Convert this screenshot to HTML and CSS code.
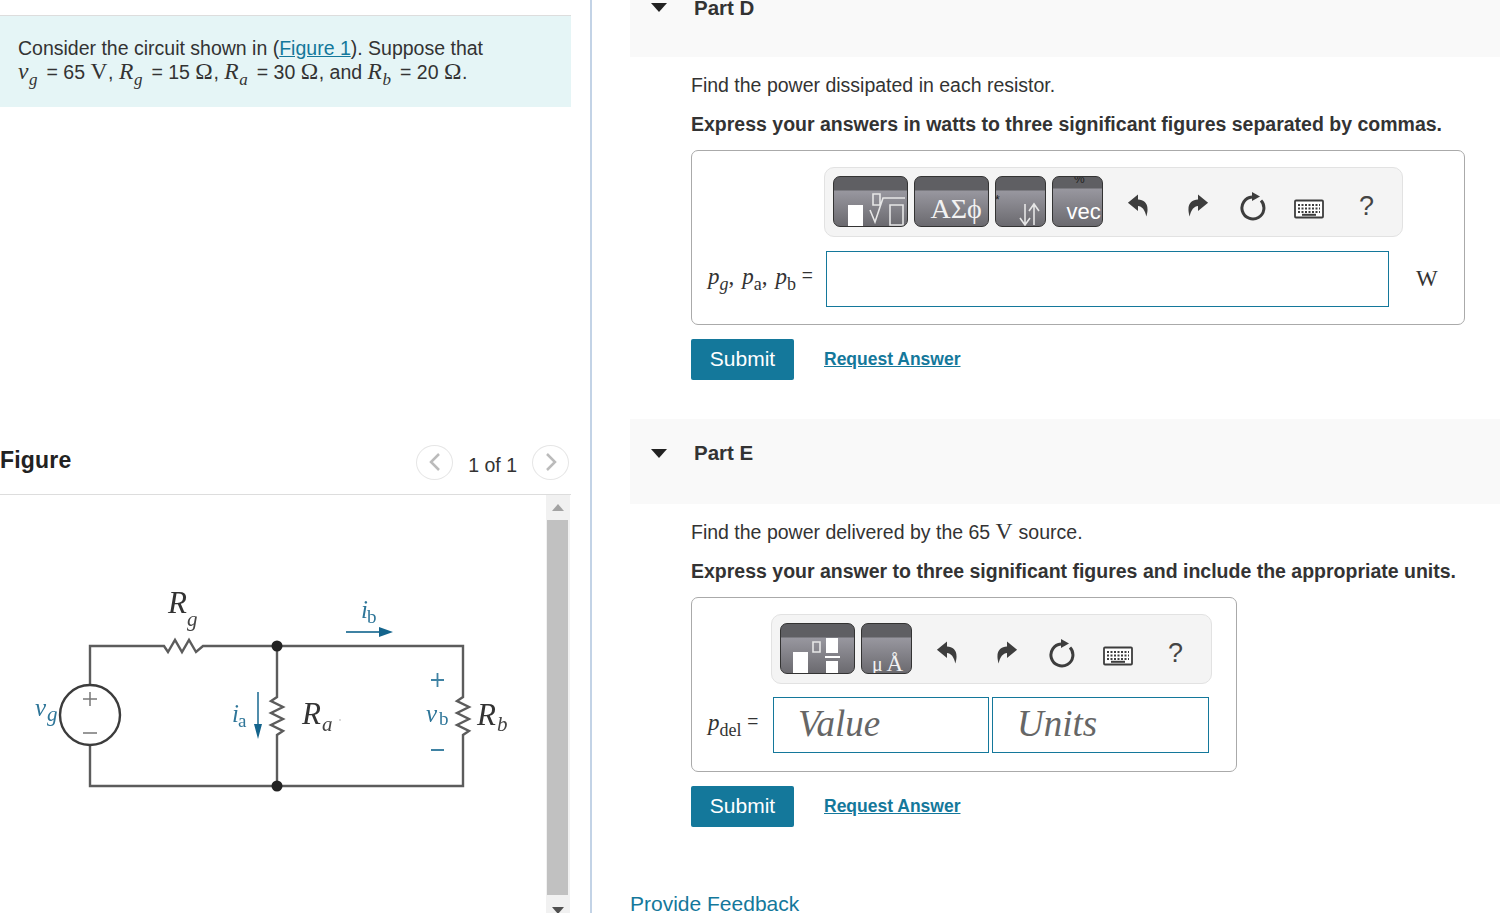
FILE: index.html
```html
<!DOCTYPE html>
<html lang="en">
<head>
    <meta charset="UTF-8"/>
    <title>Circuit problem, Parts D and E</title>
    <link rel="stylesheet" href="styles.css">
</head>
<body>
    <svg class="defs" width="0" height="0">
        <symbol id="undo" viewBox="0 0 24 26">
            <path d="M1 10 L12 1 V6.500 C20 6.500 25 13 21 25 C20 18 16 13.500 12 13.500 V19 Z"/>
        </symbol>
        <symbol id="redo" viewBox="0 0 24 26">
            <path d="M23 10 L12 1 V6.500 C4 6.500 -1 13 3 25 C4 18 8 13.500 12 13.500 V19 Z"/>
        </symbol>
        <symbol id="reset" viewBox="0 0 28 30">
            <path class="ring" d="M13 6 A11 11 0 1 0 22 9.500"/>
            <path d="M13 1 L21 5.500 L13 10 Z"/>
        </symbol>
        <symbol id="keyboard" viewBox="0 0 30 20">
            <rect class="key-case" x="1" y="1.500" width="28" height="17" rx="1"/>
            <path class="key-row" d="M4 6 H26 M4 9.500 H26 M4 13 H26"/>
            <path class="key-bar" d="M8 15.800 H22"/>
        </symbol>
    </svg>

    <div class="left">
        <div class="intro">
            Consider the circuit shown in (<a href="#">Figure 1</a>). Suppose that<br>
            <i class="m">v<sub>g</sub></i> = 65 <span class="m">V</span>, <i class="m">R<sub>g</sub></i> = 15 <span class="m">Ω</span>, <i class="m">R<sub>a</sub></i> = 30 <span class="m">Ω</span>, and <i class="m">R<sub>b</sub></i> = 20 <span class="m">Ω</span>.
        </div>
        <div class="figure-head">
            <h2>Figure</h2>
            <div class="pager">
                <span class="pager-btn"><svg width="12" height="20" viewBox="0 0 12 20"><path d="M10 2 L2 10 L10 18"/></svg></span>
                <span class="pager-text">1 of 1</span>
                <span class="pager-btn"><svg width="12" height="20" viewBox="0 0 12 20"><path d="M2 2 L10 10 L2 18"/></svg></span>
            </div>
        </div>
        <div class="figure-body">
            <div class="figure-view">
                <svg class="circuit" width="546" height="418" viewBox="0 495 546 418">
                    <path class="wire" d="M90 685 V646 H164 L168 652 L175 640 L182 652 L189 640 L196 652 L203 646 H463 V697 L457 701 L469 707 L457 713 L469 719 L457 725 L469 731 L463 735 V786 H90 V745"/>
                    <path class="wire" d="M277 646 V697 L271 701 L283 707 L271 713 L283 719 L271 725 L283 731 L277 735 V786"/>
                    <circle class="source" cx="90" cy="715" r="30"/>
                    <path class="thin" d="M83 699 H97 M90 692 V706 M83 733 H97"/>
                    <circle class="node" cx="277" cy="646" r="5.500"/>
                    <circle class="node" cx="277" cy="786" r="5.500"/>
                    <circle class="speck" cx="340" cy="720" r="0.800"/>
                    <path class="blue-line" d="M346 632 H380 M258 692 V726 M431 680 H444 M437.500 673 V687 M431 750 H444"/>
                    <path class="blue-fill" d="M393 632 L379 627 V637 Z M258 739 L254 724 H262 Z"/>
                    <text class="sym" x="168" y="613">R</text>
                    <text class="sym-sub" x="187" y="626">g</text>
                    <text class="sym" x="302" y="724">R</text>
                    <text class="sym-sub" x="322" y="731">a</text>
                    <text class="sym" x="477" y="725">R</text>
                    <text class="sym-sub" x="497" y="731">b</text>
                    <text class="var" x="35" y="716">v</text>
                    <text class="var-sub" x="47" y="721">g</text>
                    <text class="var" x="232" y="722">i</text>
                    <text class="var-up" x="238" y="727">a</text>
                    <text class="var" x="361" y="618">i</text>
                    <text class="var-up" x="367" y="623">b</text>
                    <text class="var" x="426" y="722">v</text>
                    <text class="var-up" x="439" y="725">b</text>
                </svg>
            </div>
            <div class="scrollbar">
                <span class="arrow-up"></span>
                <span class="thumb"></span>
                <span class="arrow-down"></span>
            </div>
        </div>
    </div>

    <div class="right">
        <div class="part-head part-d">
            <span class="caret"></span>
            <h3>Part D</h3>
        </div>
        <div class="part-body">
            <p class="ask">Find the power dissipated in each resistor.</p>
            <p class="ask-bold">Express your answers in watts to three significant figures separated by commas.</p>
            <div class="answer answer-wide">
                <div class="toolbar">
                    <span class="tool-btn btn-wide">
                        <svg width="73" height="49" viewBox="0 0 73 49">
                            <rect class="white" x="14" y="28" width="15" height="22"/>
                            <path class="glyph" d="M39 17 H46 V28 H39 Z M36 33 L41 45 L49 21 H71 M56 28 H69 V48 H56 Z"/>
                        </svg>
                    </span>
                    <span class="tool-btn btn-wide">
                        <svg width="73" height="49" viewBox="0 0 73 49"><text class="btn-serif" x="15.500" y="41">ΑΣϕ</text></svg>
                    </span>
                    <span class="tool-btn btn-narrow">
                        <svg width="49" height="49" viewBox="0 0 49 49">
                            <text class="tiny" x="-1" y="27">*</text>
                            <path class="glyph" d="M29 27 V47 M24 41 L29 48 L34 41 M38 48 V28 M33 34 L38 27 L43 34"/>
                        </svg>
                    </span>
                    <span class="tool-btn btn-narrow band-short">
                        <svg width="49" height="49" viewBox="0 0 49 49">
                            <text class="tiny" x="21" y="6">%</text>
                            <text class="btn-sans" x="13.500" y="42">vec</text>
                        </svg>
                    </span>
                    <span class="tool tool-undo"><svg width="22" height="25"><use href="#undo"/></svg></span>
                    <span class="tool tool-redo"><svg width="22" height="25"><use href="#redo"/></svg></span>
                    <span class="tool tool-reset"><svg width="28" height="30"><use href="#reset"/></svg></span>
                    <span class="tool tool-keys"><svg width="30" height="20"><use href="#keyboard"/></svg></span>
                    <span class="tool tool-help">?</span>
                </div>
                <div class="input-row">
                    <span class="label label-d"><i>p<sub>g</sub></i><span class="comma">,</span><i>p</i><sub>a</sub><span class="comma">,</span><i>p</i><sub>b</sub> <span class="eq">=</span></span>
                    <span class="field field-long"></span>
                    <span class="unit">W</span>
                </div>
            </div>
            <div class="actions">
                <button>Submit</button>
                <a href="#" class="request">Request Answer</a>
            </div>
        </div>

        <div class="part-head part-e">
            <span class="caret"></span>
            <h3>Part E</h3>
        </div>
        <div class="part-body">
            <p class="ask">Find the power delivered by the 65 <span class="m">V</span> source.</p>
            <p class="ask-bold">Express your answer to three significant figures and include the appropriate units.</p>
            <div class="answer answer-narrow">
                <div class="toolbar toolbar-e">
                    <span class="tool-btn btn-wide">
                        <svg width="73" height="49" viewBox="0 0 73 49">
                            <rect class="white" x="12" y="28" width="15" height="22"/>
                            <rect class="white" x="45" y="14" width="12" height="15"/>
                            <rect class="white" x="45" y="37" width="12" height="13"/>
                            <rect class="white" x="44" y="32" width="15" height="2"/>
                            <path class="glyph" d="M32 18 H39 V28 H32 Z"/>
                        </svg>
                    </span>
                    <span class="tool-btn btn-narrow">
                        <svg width="49" height="49" viewBox="0 0 49 49">
                            <text class="btn-unit" x="10" y="47">μ</text>
                            <text class="btn-angstrom" x="24.500" y="47">Å</text>
                        </svg>
                    </span>
                    <span class="tool tool-undo"><svg width="22" height="25"><use href="#undo"/></svg></span>
                    <span class="tool tool-redo"><svg width="22" height="25"><use href="#redo"/></svg></span>
                    <span class="tool tool-reset"><svg width="28" height="30"><use href="#reset"/></svg></span>
                    <span class="tool tool-keys"><svg width="30" height="20"><use href="#keyboard"/></svg></span>
                    <span class="tool tool-help">?</span>
                </div>
                <div class="input-row input-row-e">
                    <span class="label label-e"><i>p</i><sub>del</sub> <span class="eq">=</span></span>
                    <span class="field field-value">Value</span>
                    <span class="field field-units">Units</span>
                </div>
            </div>
            <div class="actions">
                <button>Submit</button>
                <a href="#" class="request">Request Answer</a>
            </div>
        </div>
        <a href="#" class="feedback">Provide Feedback</a>
    </div>
</body>
</html>
```

FILE: styles.css
```css
* {
    margin: 0;
    padding: 0;
    box-sizing: border-box;
}
html, body {
    height: 913px;
    overflow: hidden;
}
body {
    display: flex;
    font-family: "Liberation Sans", Arial, sans-serif;
    font-size: 19.500px;
    color: #333333;
    background-color: #ffffff;
}
a {
    color: #14789b;
}
.defs {
    position: absolute;
}
.m {
    font-family: "Liberation Serif", serif;
    font-size: 23.500px;
    letter-spacing: 0.600px;
    line-height: 0;
}
.m sub {
    margin-right: 3px;
    font-size: 17px;
    line-height: 0;
}

/* left column */
.left {
    width: 590px;
    padding-top: 15px;
    padding-right: 19px;
    flex-shrink: 0;
}
.intro {
    height: 92px;
    padding: 20px 18px 0;
    line-height: 24px;
    background-color: #e5f5f6;
    border-top: 1px solid #dddddd;
}
.figure-head {
    display: flex;
    justify-content: space-between;
    align-items: center;
    height: 87px;
    margin-top: 301px;
    padding: 18px 2px 0 0;
    border-bottom: 1px solid #dddddd;
}
h2 {
    font-size: 23px;
    font-weight: bold;
    letter-spacing: 0.200px;
    color: #222222;
}
.pager {
    display: flex;
    align-items: center;
    gap: 15px;
    position: relative;
    top: 2px;
}
.pager-btn {
    display: flex;
    justify-content: center;
    align-items: center;
    width: 37px;
    height: 35px;
    border: 1px solid #e6e6e6;
    border-radius: 50%;
}
.pager-btn path {
    fill: none;
    stroke: #bbbbbb;
    stroke-width: 2.500;
}
.pager-text {
    position: relative;
    top: 3px;
}
.figure-body {
    display: flex;
    height: 418px;
}
.figure-view {
    width: 546px;
}
.circuit {
    display: block;
    filter: blur(0.450px);
}
.wire {
    fill: none;
    stroke: #5c5c5c;
    stroke-width: 2.400;
}
.source {
    fill: none;
    stroke: #3c3c3c;
    stroke-width: 2.400;
}
.thin {
    fill: none;
    stroke: #777777;
    stroke-width: 1.500;
}
.node {
    fill: #222222;
}
.speck {
    fill: #aaaaaa;
}
.blue-line {
    fill: none;
    stroke: #3f82a3;
    stroke-width: 1.800;
}
.blue-fill {
    fill: #14648c;
}
.sym {
    font: italic 31px "Liberation Serif", serif;
    fill: #333333;
}
.sym-sub {
    font: italic 21px "Liberation Serif", serif;
    fill: #444444;
}
.var {
    font: italic 25px "Liberation Serif", serif;
    fill: #2f7699;
}
.var-sub {
    font: italic 21px "Liberation Serif", serif;
    fill: #2f7699;
}
.var-up {
    font: 19px "Liberation Serif", serif;
    fill: #2f7699;
}
.scrollbar {
    display: flex;
    flex-direction: column;
    align-items: center;
    width: 24px;
    padding: 9px 2px 0 1px;
    background-color: #f1f1f1;
}
.arrow-up {
    border: 6px solid transparent;
    border-top: 0;
    border-bottom: 7px solid #a3a3a3;
}
.thumb {
    width: 21px;
    height: 375px;
    margin-top: 9px;
    background-color: #c1c1c1;
    flex-shrink: 0;
}
.arrow-down {
    margin-top: 12px;
    border: 6px solid transparent;
    border-bottom: 0;
    border-top: 7px solid #505050;
}

/* right column */
.right {
    flex: 1;
    padding-left: 38px;
    border-left: 2px solid #c3d3e6;
}
.part-head {
    display: flex;
    align-items: flex-start;
    background-color: #f9f9f9;
}
.part-d {
    height: 57px;
}
.part-d h3 {
    margin-top: -4px;
}
.part-d .caret {
    margin-top: 3px;
}
.part-e {
    height: 85px;
    margin-top: 39px;
    padding-top: 22px;
}
.part-e .caret {
    margin-top: 8px;
}
.caret {
    margin-left: 21px;
    border: 8px solid transparent;
    border-bottom: 0;
    border-top: 9px solid #222222;
}
h3 {
    margin-left: 27px;
    font-size: 20.500px;
    font-weight: bold;
    line-height: 24px;
}
.part-body {
    padding-left: 61px;
}
.ask {
    padding-top: 16px;
    line-height: 24px;
}
.ask-bold {
    margin-top: 15px;
    font-weight: bold;
    line-height: 24px;
}
.answer {
    margin-top: 14px;
    height: 175px;
    padding: 16px 0 0;
    border: 1px solid #aaaaaa;
    border-radius: 7px;
}
.answer-wide {
    width: 774px;
}
.answer-narrow {
    width: 546px;
}
.toolbar {
    display: flex;
    align-items: flex-start;
    gap: 6px;
    width: 579px;
    height: 70px;
    margin-left: 132px;
    padding: 8px 0 0 8px;
    background-color: #f4f4f4;
    border: 1px solid #e2e2e2;
    border-radius: 10px;
}
.toolbar-e {
    width: 441px;
    margin-left: 79px;
}
.tool-btn {
    display: block;
    height: 51px;
    border: 1px solid #333333;
    border-radius: 7px;
    overflow: hidden;
    background: linear-gradient(#5f5f63 0, #5f5f63 13px, #98979f 14px, #6b6a6f 100%);
    flex-shrink: 0;
}
.band-short {
    background: linear-gradient(#5f5f63 0, #5f5f63 11px, #98979f 12px, #6b6a6f 100%);
}
.btn-wide {
    width: 75px;
}
.btn-narrow {
    width: 51px;
}
.tool-btn svg {
    display: block;
}
.white {
    fill: #ffffff;
}
.glyph {
    fill: none;
    stroke: #e6e6e6;
    stroke-width: 1.600;
}
.btn-serif {
    font: 28px "Liberation Serif", serif;
    fill: #f2f2f2;
}
.btn-angstrom {
    font: 23px "Liberation Serif", serif;
    fill: #f2f2f2;
}
.btn-unit {
    font: 20px "Liberation Serif", serif;
    fill: #f2f2f2;
}
.btn-sans {
    font: 22px "Liberation Sans", sans-serif;
    fill: #ffffff;
}
.tiny {
    font: 12px "Liberation Sans", sans-serif;
    fill: #222222;
}
.tool {
    display: flex;
    justify-content: center;
    width: 51px;
    flex-shrink: 0;
}
.tool svg {
    fill: #3d3d3d;
}
.tool-undo {
    margin-top: 17px;
    margin-left: 3px;
}
.tool-redo {
    margin-top: 17px;
    margin-left: 3px;
}
.tool-reset {
    margin-top: 15px;
    margin-left: -2px;
}
.tool-keys {
    margin-top: 23px;
    margin-left: -1px;
}
.tool-help {
    margin-top: 15px;
    margin-left: 1px;
    font-size: 27px;
    color: #444444;
    line-height: 30px;
}
.ring {
    fill: none;
    stroke: #3d3d3d;
    stroke-width: 3;
}
.key-case {
    fill: #ffffff;
    stroke: #3d3d3d;
    stroke-width: 1.800;
}
.key-row {
    fill: none;
    stroke: #3d3d3d;
    stroke-width: 2;
    stroke-dasharray: 2 1.500;
}
.key-bar {
    fill: none;
    stroke: #3d3d3d;
    stroke-width: 2;
}
.input-row {
    display: flex;
    align-items: center;
    margin-top: 14px;
    height: 56px;
}
.input-row-e {
    margin-top: 13px;
}
.label {
    font: 23px "Liberation Serif", serif;
    color: #333333;
    margin-left: 16px;
    white-space: nowrap;
    position: relative;
    top: -2px;
}
.label sub {
    font-size: 18px;
    line-height: 0;
}
.comma {
    margin-right: 8px;
}
.eq {
    font-family: "Liberation Sans", sans-serif;
    font-size: 19px;
    position: relative;
    top: -3px;
}
.label-d {
    width: 118px;
}
.label-e {
    width: 65px;
}
.field {
    display: block;
    height: 56px;
    padding-left: 24px;
    border: 1px solid #14789b;
    background-color: #ffffff;
    font: italic 37px/52px "Liberation Serif", serif;
    color: #666666;
}
.field-long {
    width: 563px;
}
.field-value {
    width: 216px;
}
.field-units {
    width: 217px;
    margin-left: 3px;
}
.unit {
    margin-left: 27px;
    font: 23px "Liberation Serif", serif;
}
.actions {
    display: flex;
    align-items: center;
    margin-top: 14px;
}
button {
    width: 103px;
    height: 41px;
    padding-bottom: 2px;
    background-color: #14789b;
    color: #ffffff;
    font: 21px "Liberation Sans", sans-serif;
    border: none;
    border-radius: 2px;
}
.request {
    margin-left: 30px;
    font-size: 17.500px;
    font-weight: bold;
}
.feedback {
    display: block;
    margin-top: 65px;
    font-size: 21px;
    text-decoration: none;
    line-height: 24px;
}
```
